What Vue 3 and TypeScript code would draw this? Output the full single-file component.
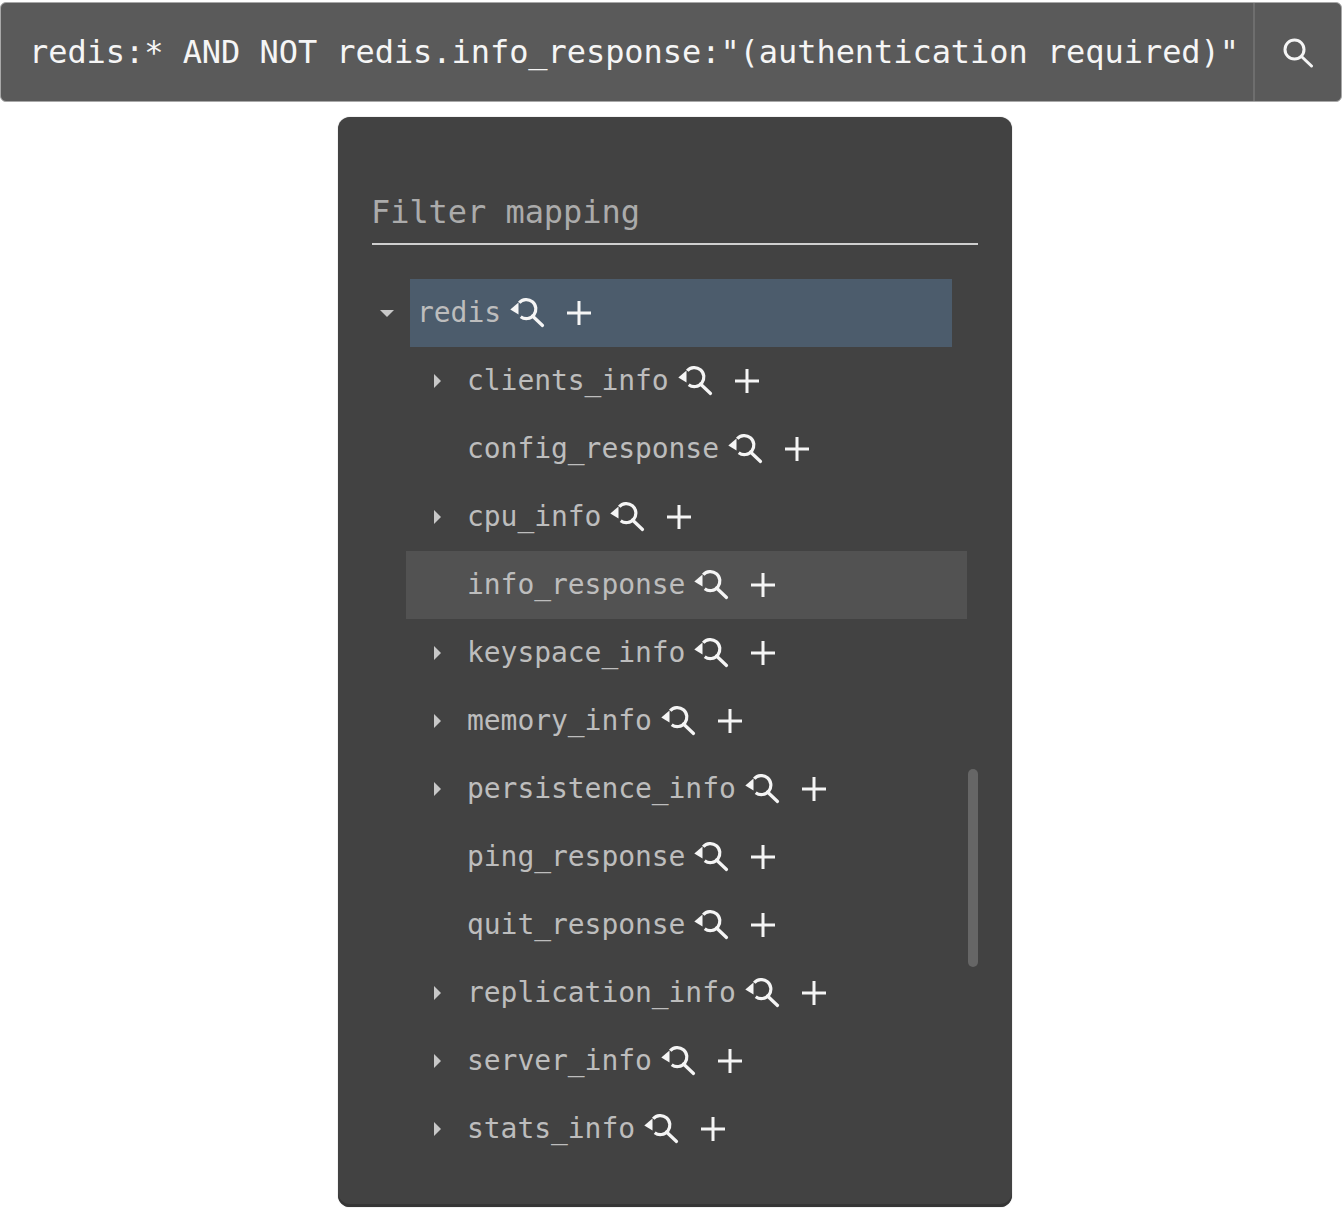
<script setup lang="ts">
interface Field {
  name: string
  expandable: boolean
  hover?: boolean
}

const fields: Field[] = [
  { name: 'clients_info', expandable: true },
  { name: 'config_response', expandable: false },
  { name: 'cpu_info', expandable: true },
  { name: 'info_response', expandable: false, hover: true },
  { name: 'keyspace_info', expandable: true },
  { name: 'memory_info', expandable: true },
  { name: 'persistence_info', expandable: true },
  { name: 'ping_response', expandable: false },
  { name: 'quit_response', expandable: false },
  { name: 'replication_info', expandable: true },
  { name: 'server_info', expandable: true },
  { name: 'stats_info', expandable: true },
]

const query = 'redis:* AND NOT redis.info_response:"(authentication required)"'
</script>

<template>
  <div class="page">
    <div class="search-bar">
      <div class="query">{{ query }}</div>
      <button class="search-btn" aria-label="Search">
        <svg width="32" height="32" viewBox="0 0 32 32" fill="none" stroke="currentColor" stroke-width="3">
          <circle cx="12.500" cy="13.500" r="9.500" />
          <path d="M19.500 20.500 L29.500 30" stroke-linecap="round" />
        </svg>
      </button>
    </div>

    <div class="panel">
      <div class="filter"><span class="filter-text">Filter mapping</span></div>
      <div class="tree">
        <div class="root-row">
          <span class="toggle root-toggle"><i class="caret-down"></i></span>
          <div class="root-label">
            <span class="name">redis</span>
            <svg class="history" width="36" height="36" viewBox="0 0 36 36" fill="none" stroke="currentColor" stroke-width="3.200">
              <path d="M10.200 7.800 A9.500 9.500 0 1 1 11.700 21.700" />
              <path d="M23.500 21 L33.500 30.500" stroke-linecap="round" />
              <path d="M1.300 14.500 L9.500 7.500 L9.500 19.500 Z" fill="currentColor" stroke="none" />
            </svg>
            <svg class="plus" width="26" height="26" viewBox="0 0 26 26" stroke="currentColor" stroke-width="3">
              <path d="M13 1 V25 M1 13 H25" />
            </svg>
          </div>
        </div>
        <div v-for="f in fields" :key="f.name" class="row" :class="{ hover: f.hover }">
          <span class="toggle"><i v-if="f.expandable" class="caret-right"></i></span>
          <span class="name">{{ f.name }}</span>
          <svg class="history" width="36" height="36" viewBox="0 0 36 36" fill="none" stroke="currentColor" stroke-width="3.200">
            <path d="M10.200 7.800 A9.500 9.500 0 1 1 11.700 21.700" />
            <path d="M23.500 21 L33.500 30.500" stroke-linecap="round" />
            <path d="M1.300 14.500 L9.500 7.500 L9.500 19.500 Z" fill="currentColor" stroke="none" />
          </svg>
          <svg class="plus" width="26" height="26" viewBox="0 0 26 26" stroke="currentColor" stroke-width="3">
            <path d="M13 1 V25 M1 13 H25" />
          </svg>
        </div>
      </div>
      <div class="scroll-thumb"></div>
    </div>
  </div>
</template>

<style>
html, body { background: #fff; }
</style>

<style scoped>
.page {
  width: 1342px;
  height: 1210px;
  padding-top: 2px;
  box-sizing: border-box;
  font-family: "DejaVu Sans Mono", "Liberation Mono", monospace;
  overflow: hidden;
}
.search-bar {
  display: flex;
  height: 100px;
  box-sizing: border-box;
  background: #5a5a5a;
  border: 1px solid #a8a8a8;
  border-radius: 6px;
}
.query {
  flex: 1;
  display: flex;
  align-items: center;
  padding-left: 28px;
  font-size: 32px;
  letter-spacing: -0.06px;
  color: #f5f5f5;
  white-space: nowrap;
}
.search-btn {
  width: 88px;
  padding: 0;
  display: flex;
  align-items: center;
  justify-content: center;
  background: none;
  border: none;
  border-left: 2px solid #6e6e6e;
  color: #f5f5f5;
}
.panel {
  position: relative;
  width: 674px;
  height: 1090px;
  margin: 15px 0 0 338px;
  box-sizing: border-box;
  padding: 0 34px;
  background: #424242;
  border-radius: 12px;
  box-shadow: inset 0 -3px 0 #353535, 0 0 1px rgba(0, 0, 0, 0.5);
}
.filter {
  height: 128px;
  box-sizing: border-box;
  padding-top: 74px;
  font-size: 32px;
  line-height: 42px;
  color: #ababab;
  border-bottom: 2px solid #cfcfcf;
}
.filter-text {
  margin-left: -1px;
  letter-spacing: -0.06px;
}
.tree {
  margin-top: 34px;
  font-size: 28px;
  color: #bdbdbd;
}
.root-row {
  display: flex;
  height: 68px;
  align-items: center;
}
.toggle {
  flex: none;
  display: flex;
  align-items: center;
}
.root-toggle {
  width: 38px;
  padding-left: 8px;
  box-sizing: border-box;
}
.root-label {
  display: flex;
  align-items: center;
  width: 542px;
  height: 68px;
  padding-left: 7px;
  box-sizing: border-box;
  background: #4c5c6c;
}
.row {
  display: flex;
  align-items: center;
  height: 68px;
  width: 561px;
  margin-left: 34px;
  box-sizing: border-box;
}
.row .toggle {
  width: 61px;
  padding-left: 28px;
  box-sizing: border-box;
}
.row.hover {
  background: #525252;
}
.name {
  letter-spacing: -0.06px;
  white-space: nowrap;
  line-height: 36px;
}
.caret-down {
  display: block;
  border-top: 7px solid #c8c8c8;
  border-left: 7.500px solid transparent;
  border-right: 7.500px solid transparent;
}
.caret-right {
  display: block;
  border-left: 7px solid #c8c8c8;
  border-top: 7.500px solid transparent;
  border-bottom: 7.500px solid transparent;
}
.history {
  flex: none;
  margin-left: 8px;
  color: #f5f5f5;
}
.plus {
  flex: none;
  margin-left: 21px;
  color: #f5f5f5;
}
.scroll-thumb {
  position: absolute;
  left: 630px;
  top: 652px;
  width: 10px;
  height: 198px;
  border-radius: 5px;
  background: #666;
}
</style>
